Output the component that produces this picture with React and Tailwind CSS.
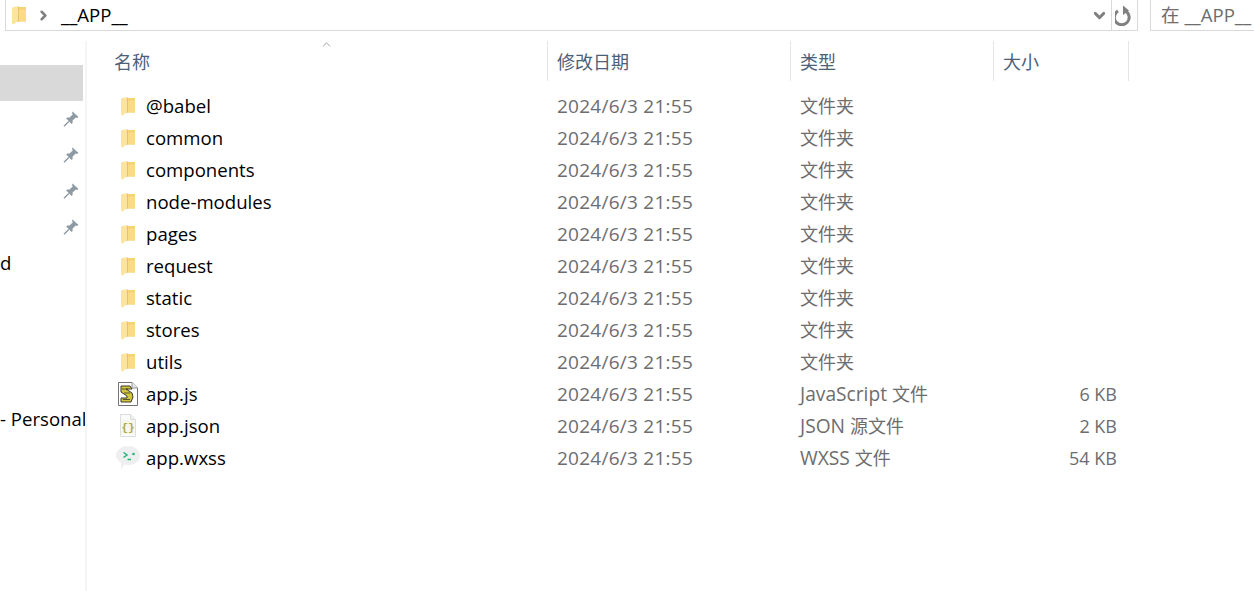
import React from 'react';
import { ChevronDown, ChevronUp, ChevronRight } from 'lucide-react';

const font = { fontFamily: '"Open Sans", "Noto Sans CJK SC", sans-serif' };

const rows = [
  { name: '@babel', type: '文件夹', size: '', icon: 'folder' },
  { name: 'common', type: '文件夹', size: '', icon: 'folder' },
  { name: 'components', type: '文件夹', size: '', icon: 'folder' },
  { name: 'node-modules', type: '文件夹', size: '', icon: 'folder' },
  { name: 'pages', type: '文件夹', size: '', icon: 'folder' },
  { name: 'request', type: '文件夹', size: '', icon: 'folder' },
  { name: 'static', type: '文件夹', size: '', icon: 'folder' },
  { name: 'stores', type: '文件夹', size: '', icon: 'folder' },
  { name: 'utils', type: '文件夹', size: '', icon: 'folder' },
  { name: 'app.js', prefix: 'JavaScript ', type: '文件', size: '6 KB', icon: 'js' },
  { name: 'app.json', prefix: 'JSON ', type: '源文件', size: '2 KB', icon: 'json' },
  { name: 'app.wxss', prefix: 'WXSS ', type: '文件', size: '54 KB', icon: 'wxss' },
];

const FolderIcon = ({ w = 16, h = 20 }) => (
  <svg width={w} height={h} viewBox="0 0 16 20">
    <path d="M3 2 H15 V16.5 H3 Z" fill="#f6d271" />
    <path d="M7 4.5 H15 V16.5 H7 Z" fill="#fbdc84" />
    <path d="M1 2.5 L7 1 V15.5 L3 19.5 L1 18.5 Z" fill="#fbe3a0" />
    <path d="M7 1 V15.5 L6 16.5 H7.8 V2 Z" fill="#e3bf62" />
  </svg>
);

const JsIcon = () => (
  <svg width="20" height="24" viewBox="0 0 20 24">
    <path d="M0.5 0.5 H14 L19.5 6 V23.5 H0.5 Z" fill="#fff" stroke="#6f7378" />
    <path d="M14 0.5 V6 H19.5" fill="#e8e8e8" stroke="#8f9397" />
    <path d="M3 4 H12 L14 7 H8 L14 11 L15 15 L13 20 H3 L3 16 H9 L9 14 L3 10 Z" fill="#d3c63f" stroke="#3a3a30" strokeWidth="1" />
    <path d="M4 7 H10 M6 11 H12 M5 17.5 H12" stroke="#3a3a30" strokeWidth="0.8" />
  </svg>
);

const JsonIcon = () => (
  <svg width="16" height="23" viewBox="0 0 16 23">
    <path d="M0.5 0.5 H10.5 L15.5 5.5 V22.5 H0.5 Z" fill="#fbfbfb" stroke="#dcdedf" />
    <path d="M10.5 0.5 V5.5 H15.5" fill="#eeeeee" stroke="#dcdedf" />
    <rect x="1" y="6" width="14" height="14" fill="#f6f7ec" />
    <text x="8" y="16.5" textAnchor="middle" fontSize="11" fill="#a9a94a" fontFamily="Liberation Mono, monospace" fontWeight="700">{'{}'}</text>
  </svg>
);

const WxssIcon = () => (
  <svg width="24" height="25" viewBox="0 0 24 25">
    <path d="M12 1 C19 1 24 5 24 10.5 C24 16 19 20 12 20 C10.8 20 9.5 19.8 8.5 19.5 L5 24.5 L5 17.5 C2 16 0 13.5 0 10.5 C0 5 5 1 12 1 Z" fill="#eeeff0" />
    <path d="M7.5 7.5 L11 10 L7.5 12.5" fill="none" stroke="#22b573" strokeWidth="1.5" />
    <path d="M11.5 14.5 H15" stroke="#22b573" strokeWidth="1.5" />
    <circle cx="17.5" cy="9" r="1.3" fill="#22b573" />
  </svg>
);

const PinIcon = () => (
  <svg width="16" height="16" viewBox="0 0 16 16">
    <path d="M9.5 0.5 L15.5 6 L14 7 L12.8 6.4 L9.6 9.6 L9.6 12 L8.6 13 L3.2 7.6 L4.2 6.6 L6.6 6.6 L9.8 3.2 L9 2 Z" fill="#8e9aa3" />
    <path d="M5.8 10.4 L1 15.2" stroke="#8e9aa3" strokeWidth="1.4" />
  </svg>
);

const RefreshIcon = () => (
  <svg width="19" height="21" viewBox="0 0 19 21">
    <path d="M3 5.5 A7.4 7.4 0 1 0 10.5 5.5" fill="none" stroke="#808080" strokeWidth="3" transform="translate(0 0.5)" />
    <path d="M8 0.5 L14 5.5 L8 10 Z" fill="#808080" />
  </svg>
);

const FileIcon = ({ icon }) => {
  if (icon === 'js') return <JsIcon />;
  if (icon === 'json') return <JsonIcon />;
  if (icon === 'wxss') return <WxssIcon />;
  return <FolderIcon />;
};

const cols = 'grid grid-cols-[444px_243px_203px_135px]';

export default function App() {
  return (
    <div className="w-[1254px] h-[591px] bg-white overflow-hidden flex flex-col text-[18px]" style={font}>
      {/* Address bar */}
      <div className="h-[31px] flex shrink-0">
        <div className="ml-[5px] w-[1133px] border-b border-l border-r border-[#d9d9d9] flex items-center">
          <div className="ml-[5px] flex items-center">
            <FolderIcon />
          </div>
          <ChevronRight size={15} strokeWidth={4} className="ml-[9px] text-[#808080]" />
          <span className="ml-[10px] text-black leading-none text-[18.6px]">__APP__</span>
          <ChevronDown size={17} strokeWidth={4} className="ml-auto mr-[3px] text-[#808080]" />
          <div className="w-[26px] h-full border-l border-[#d9d9d9] flex items-center justify-center">
            <RefreshIcon />
          </div>
        </div>
        <div className="ml-[12px] flex-1 border-b border-l border-[#d9d9d9] pl-[10px] flex items-center whitespace-nowrap overflow-hidden text-[#6d6d6d] text-[18.6px]">
          在 __APP__
        </div>
      </div>

      <div className="flex-1 flex min-h-0">
        {/* Nav pane */}
        <div className="w-[87px] shrink-0 border-r-2 border-[#f5f5f5] mt-[10px] pt-[24px] overflow-hidden">
          <div className="h-[36px] w-[83px] bg-[#d9d9d9]" />
          {[0, 1, 2, 3].map(i => (
            <div key={i} className="h-[36px] w-[83px] flex items-center justify-end pr-[4px]">
              <PinIcon />
            </div>
          ))}
          <div className="h-[36px] w-[83px] flex items-center text-black whitespace-nowrap text-[18.6px]">d</div>
          <div className="h-[120px]" />
          <div className="h-[36px] w-[85px] flex items-center text-black whitespace-nowrap text-[18.6px]">- Personal</div>
        </div>

        {/* File list */}
        <div className="flex-1 pl-[17px] relative">
          <ChevronUp size={13} strokeWidth={1.5} className="absolute left-[233px] top-[7px] text-[#8a8a8a]" />
          <div className={`${cols} mt-[10px] h-[40px] items-stretch text-[#4c607a]`}>
            <div className="pl-[10px] pt-[2px] border-r border-[#e5e5e5] flex items-center">名称</div>
            <div className="pl-[9px] pt-[2px] border-r border-[#e5e5e5] flex items-center">修改日期</div>
            <div className="pl-[9px] pt-[2px] border-r border-[#e5e5e5] flex items-center">类型</div>
            <div className="pl-[9px] pt-[2px] border-r border-[#e5e5e5] flex items-center">大小</div>
          </div>
          <div className="mt-[9px]">
            {rows.map(r => (
              <div key={r.name} className={`${cols} h-[32px] items-center`}>
                <div className="flex items-center text-black text-[18.6px]">
                  <div className="ml-[5px] w-[37px] flex items-center justify-center"><FileIcon icon={r.icon} /></div>
                  <span>{r.name}</span>
                </div>
                <div className="pl-[9px] text-[#6d6d6d] text-[19px] tracking-[0.25px]">2024/6/3 21:55</div>
                <div className="pl-[9px] text-[#6d6d6d]">
                  {r.prefix && <span className="text-[19.2px]">{r.prefix}</span>}
                  {r.type}
                </div>
                <div className="pr-[12px] text-right text-[#6d6d6d]">{r.size}</div>
              </div>
            ))}
          </div>
        </div>
      </div>
    </div>
  );
}
